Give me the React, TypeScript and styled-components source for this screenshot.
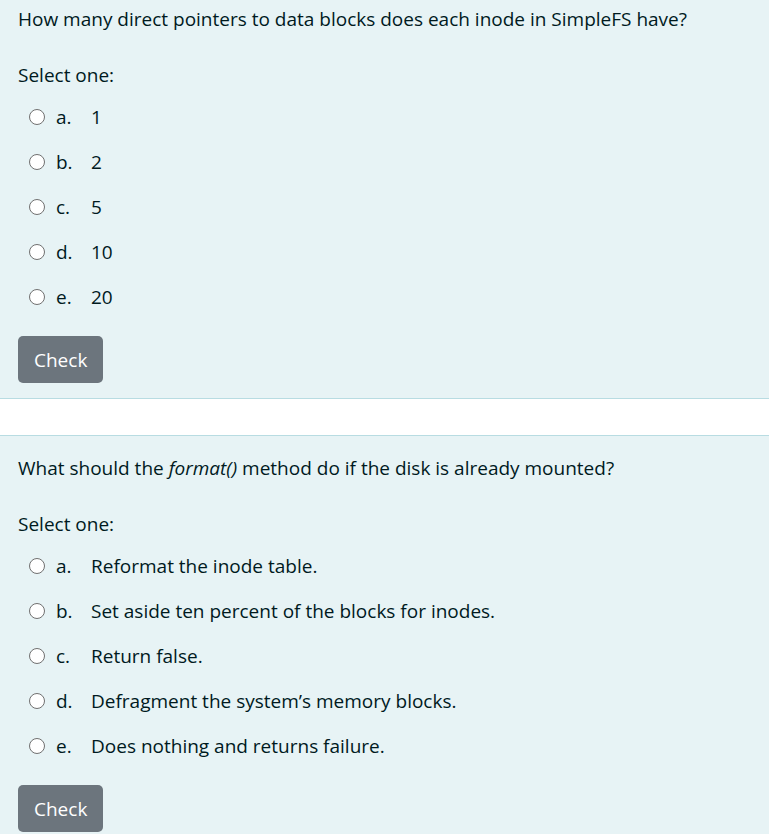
import styled, { createGlobalStyle } from "styled-components";

const GlobalStyle = createGlobalStyle`
    html, body {
        margin: 0;
        padding: 0;
        background: #ffffff;
    }
    body {
        font-family: "Open Sans", "Noto Sans", Arial, sans-serif;
        color: #001a1e;
        overflow: hidden;
    }
`;

const Page = styled.div`
    display: flex;
    flex-direction: column;
    gap: 36px;
    margin-top: -14px;
`;

const Card = styled.section`
    background: #e7f3f5;
    border-top: 1px solid #b8dce2;
    border-bottom: 1px solid #b8dce2;
    padding: 18px 18px 15px;
    display: flex;
    flex-direction: column;
    align-items: flex-start;
`;

const Question = styled.p`
    margin: 0;
    font-size: 19px;
    line-height: 28px;
`;

const Prompt = styled.p`
    margin: 28px 0 5px;
    font-size: 19px;
    line-height: 28px;
`;

const Options = styled.div`
    display: flex;
    flex-direction: column;
    align-self: stretch;
`;

const Option = styled.label`
    display: flex;
    align-items: center;
    height: 45px;
    padding-left: 11px;
    font-size: 19px;
    cursor: pointer;
`;

const Radio = styled.span`
    width: 16px;
    height: 16px;
    box-sizing: border-box;
    border: 1.6px solid #707070;
    border-radius: 50%;
    background: #ffffff;
    flex: none;
    margin-right: 11px;
`;

const Letter = styled.span`
    width: 35px;
    flex: none;
`;

const CheckButton = styled.button`
    margin-top: 17px;
    height: 47px;
    padding: 0 16px;
    border: none;
    border-radius: 5px;
    background: #6c757d;
    color: #ffffff;
    font-family: inherit;
    font-size: 19px;
`;

interface IQuestion {
    id: number;
    text: React.ReactNode;
    answers: string[];
}

const questions: IQuestion[] = [
    {
        id: 1,
        text: "How many direct pointers to data blocks does each inode in SimpleFS have?",
        answers: ["1", "2", "5", "10", "20"],
    },
    {
        id: 2,
        text: (
            <>
                What should the <em>format()</em> method do if the disk is already mounted?
            </>
        ),
        answers: [
            "Reformat the inode table.",
            "Set aside ten percent of the blocks for inodes.",
            "Return false.",
            "Defragment the system\u2019s memory blocks.",
            "Does nothing and returns failure.",
        ],
    },
];

const letters = ["a.", "b.", "c.", "d.", "e."];

function App() {
    return (
        <>
            <GlobalStyle />
            <Page>
                {questions.map((q) => (
                    <Card key={q.id}>
                        <Question>{q.text}</Question>
                        <Prompt>Select one:</Prompt>
                        <Options>
                            {q.answers.map((answer, i) => (
                                <Option key={answer}>
                                    <Radio />
                                    <Letter>{letters[i]}</Letter>
                                    <span>{answer}</span>
                                </Option>
                            ))}
                        </Options>
                        <CheckButton>Check</CheckButton>
                    </Card>
                ))}
            </Page>
        </>
    );
}

export default App;
